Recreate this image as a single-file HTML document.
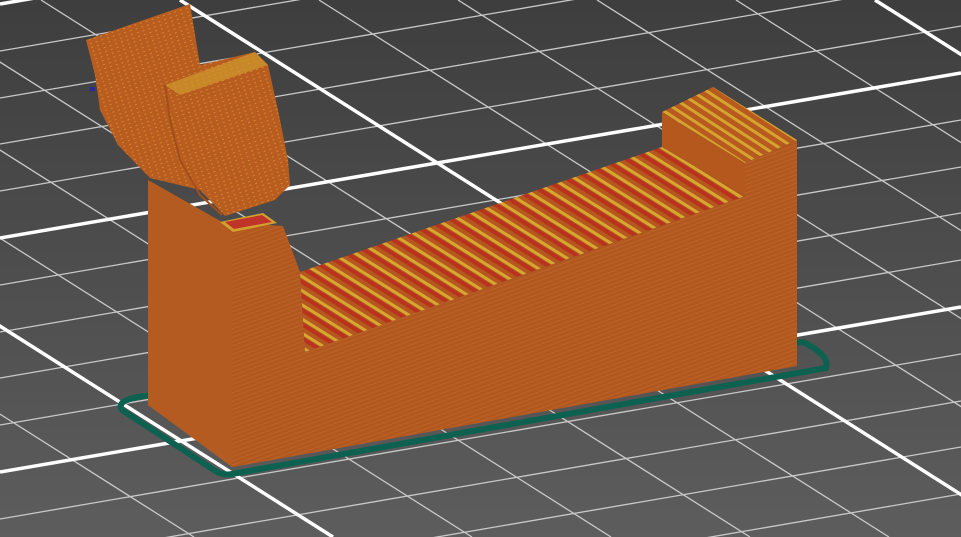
<!DOCTYPE html>
<html><head><meta charset="utf-8"><style>html,body{margin:0;padding:0;background:#484848;overflow:hidden;width:961px;height:537px}svg{display:block}</style></head>
<body>
<svg width="961" height="537" viewBox="0 0 961 537" xmlns="http://www.w3.org/2000/svg" style="overflow:hidden">
<defs>
<linearGradient id="bg" x1="0" y1="0" x2="0" y2="1">
<stop offset="0" stop-color="#3e3e3e"/><stop offset="1" stop-color="#5d5d5d"/>
</linearGradient>
<pattern id="ramp" width="12" height="12" patternUnits="userSpaceOnUse" patternTransform="rotate(32)">
<rect width="12" height="12" fill="#b5581f"/>
<rect y="1" width="12" height="3" fill="#d6a830"/>
<rect y="5" width="12" height="4" fill="#b8321e"/>
</pattern>
<pattern id="post" width="8" height="8" patternUnits="userSpaceOnUse" patternTransform="rotate(33)">
<rect width="8" height="8" fill="#b8591f"/>
<rect y="2" width="8" height="3" fill="#d3a52e"/>
</pattern>
<pattern id="wing" width="6" height="4" patternUnits="userSpaceOnUse" patternTransform="rotate(-18)">
<rect width="6" height="4" fill="#b85c1f"/>
<rect y="1" width="2" height="1" fill="#d0892e"/>
</pattern>
<pattern id="face" width="4" height="4" patternUnits="userSpaceOnUse" patternTransform="rotate(70)">
<rect width="4" height="4" fill="#b15720"/>
<rect width="1" height="4" fill="#bd6325"/>
</pattern>
<clipPath id="c"><rect width="961" height="537"/></clipPath>
</defs>
<g clip-path="url(#c)">
<rect width="961" height="537" fill="url(#bg)"/>
<g stroke="#c9c9c9" stroke-width="1.3">
<line x1="0" y1="51" x2="961" y2="-114"/>
<line x1="0" y1="98" x2="961" y2="-67"/>
<line x1="0" y1="144" x2="961" y2="-21"/>
<line x1="0" y1="191" x2="961" y2="26"/>
<line x1="0" y1="285" x2="961" y2="120"/>
<line x1="0" y1="332" x2="961" y2="167"/>
<line x1="0" y1="378" x2="961" y2="213"/>
<line x1="0" y1="425" x2="961" y2="260"/>
<line x1="0" y1="519" x2="961" y2="354"/>
<line x1="0" y1="566" x2="961" y2="401"/>
<line x1="0" y1="612" x2="961" y2="447"/>
<line x1="0" y1="659" x2="961" y2="494"/>
<line x1="-654" y1="0" x2="194" y2="537"/>
<line x1="-376" y1="0" x2="472" y2="537"/>
<line x1="-237" y1="0" x2="611" y2="537"/>
<line x1="-98" y1="0" x2="750" y2="537"/>
<line x1="41" y1="0" x2="889" y2="537"/>
<line x1="319" y1="0" x2="1167" y2="537"/>
<line x1="458" y1="0" x2="1306" y2="537"/>
<line x1="597" y1="0" x2="1445" y2="537"/>
<line x1="736" y1="0" x2="1584" y2="537"/>
</g>
<g stroke="#ffffff" stroke-width="3.5">
<line x1="0" y1="238" x2="961" y2="73"/>
<line x1="0" y1="472" x2="961" y2="307"/>
<line x1="0" y1="4" x2="961" y2="-161"/>
<line x1="0" y1="706" x2="961" y2="541"/>
<line x1="-515" y1="0" x2="333" y2="537"/>
<line x1="180" y1="0" x2="1028" y2="537"/>
<line x1="875" y1="0" x2="1723" y2="537"/>
</g>
<!-- brim -->
<path d="M144,396 L803,342 Q830,355 826,368 L232,474 Q222,476 214,470 L122,410 Q115,400 144,396 Z" fill="none" stroke="#0d6150" stroke-width="6" stroke-linejoin="round"/>
<!-- body -->
<polygon points="148,180 222,222 283,226 300,272 305,352 745,196 745,163 797,140 797,366 233,467 148,405" fill="url(#face)"/>
<polygon points="148,180 232,228 232,467 148,405" fill="#b35b21"/>
<!-- ramp top -->
<polygon points="300,272 662,147 745,196 305,352" fill="url(#ramp)"/>
<!-- right post -->
<polygon points="662,112 745,163 745,196 662,147" fill="#b4581e"/>
<polygon points="662,112 713,87 797,140 745,163" fill="url(#post)"/>
<!-- wings -->
<path d="M86,40 L190,4 L200,65 L255,52 L268,65 L278,110 L288,160 L290,185 L275,200 L250,208 L225,216 L200,190 L150,178 L118,145 L100,110 L95,75 Z" fill="url(#wing)"/>
<path d="M165,85 L255,52 L268,65 L180,95 Z" fill="#cf9a2c" opacity="0.7"/>
<path d="M165,85 L170,120 L180,160 L200,195 L222,215" fill="none" stroke="#a24e1b" stroke-width="2"/>
<!-- left post top -->
<polygon points="220,222 263,213 277,223 233,232" fill="#d2a12c"/>
<polygon points="225,222 262,215 272,222 234,229" fill="#c0342a"/>
<rect x="90" y="87" width="5" height="4" fill="#2a2aa0"/>
</g>
</svg>
</body></html>
